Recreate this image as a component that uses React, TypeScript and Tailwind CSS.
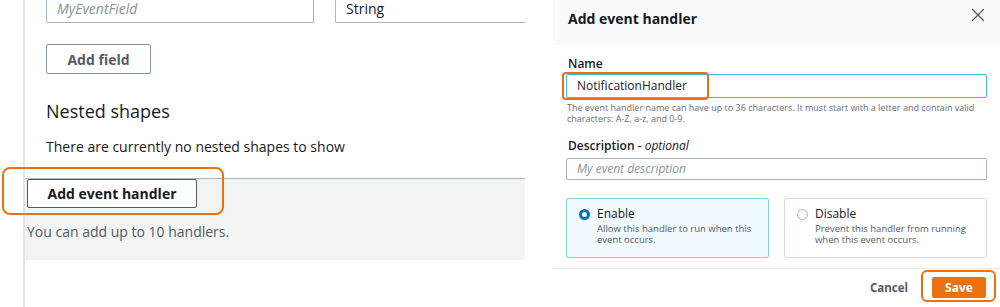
import { X } from "lucide-react";

const font = { fontFamily: '"Open Sans", "Noto Sans", Arial, sans-serif' };

function RadioCard({
  selected,
  title,
  lines,
}: {
  selected?: boolean;
  title: string;
  lines: string[];
}) {
  return (
    <div
      className={`flex-1 h-[60px] rounded-[2px] border flex items-start pl-[12px] pt-[7px] ${
        selected ? "bg-[#f1faff] border-[#88cbe0]" : "bg-white border-[#d5dbdb]"
      }`}
    >
      <span
        className={`mt-[3px] shrink-0 w-[11px] h-[11px] rounded-full bg-white ${
          selected ? "border-[3px] border-[#0073bb]" : "border border-[#aab7b8]"
        }`}
      />
      <div className="ml-[7px]">
        <div className="text-[12px] leading-[16px] font-medium text-[#16191f]">{title}</div>
        <div className="text-[9.5px] leading-[11px] text-[#545b64] mt-[1px] whitespace-nowrap">
          {lines.map((l) => (
            <div key={l}>{l}</div>
          ))}
        </div>
      </div>
    </div>
  );
}

export default function App() {
  return (
    <div className="relative w-[1000px] h-[307px] bg-white flex overflow-hidden" style={font}>
      {/* Left: event shape editor */}
      <div className="ml-[23px] w-[502px] shrink-0 border-l-2 border-[#e3e5e6] flex flex-col">
        <div className="pl-[21px] flex flex-col">
          <div className="flex gap-[21px]">
            <div className="w-[268px] h-[23px] border border-t-0 border-[#aab7b8] rounded-b-[2px] pl-[10px] pt-[1px]">
              <span className="block text-[14px] leading-[16px] italic text-[#879596]">MyEventField</span>
            </div>
            <div className="flex-1 h-[23px] border border-t-0 border-r-0 border-[#aab7b8] rounded-bl-[2px] pl-[10px] pt-[1px]">
              <span className="block text-[14px] leading-[16px] text-[#16191f]">String</span>
            </div>
          </div>
          <button className="mt-[21px] w-[105px] h-[30px] border border-[#879596] rounded-[2px] bg-white text-[14px] font-bold text-[#545b64]">
            Add field
          </button>
          <div className="mt-[25px] text-[18px] leading-[24px] text-[#16191f]">Nested shapes</div>
          <div className="mt-[14px] text-[14px] leading-[20px] text-[#16191f]">
            There are currently no nested shapes to show
          </div>
        </div>
        <div className="mt-[21px] border-t border-[#aab7b8] bg-[#f2f3f3] pb-[18px] flex flex-col items-start">
          <button className="ml-[2px] w-[170px] h-[29px] border border-[#545b64] rounded-[2px] bg-white text-[14px] font-bold text-[#16191f]">
            Add event handler
          </button>
          <div className="ml-[2px] mt-[14px] text-[14px] leading-[20px] text-[#545b64]">
            You can add up to 10 handlers.
          </div>
        </div>
      </div>

      {/* Right: side panel */}
      <div className="ml-[28px] flex-1 min-w-0 flex flex-col">
        <div className="h-[45px] bg-[#fafafa] flex items-start justify-between pl-[15px] pr-[11px]">
          <span className="mt-[9px] text-[14px] leading-[20px] font-bold text-[#16191f]">Add event handler</span>
          <X className="mt-[4px] w-[22px] h-[22px] text-[#545b64]" strokeWidth={1.4} />
        </div>
        <div className="px-[13px] flex flex-col">
          <div className="mt-[11px] ml-[2px] text-[12px] leading-[16px] font-semibold text-[#16191f]">Name</div>
          <div className="mt-[2px] h-[24px] border border-[#44b9d6] rounded-[2px] flex items-center pl-[10px]">
            <span className="text-[12px] text-[#16191f]">NotificationHandler</span>
          </div>
          <div className="mt-[4px] ml-[1px] text-[9px] leading-[11px] text-[#687078] whitespace-nowrap">
            The event handler name can have up to 36 characters. It must start with a letter and contain valid
            <br />
            characters: A-Z, a-z, and 0-9.
          </div>
          <div className="mt-[14px] ml-[2px] text-[12px] leading-[16px] text-[#16191f]">
            <span className="font-semibold">Description - </span>
            <span className="italic">optional</span>
          </div>
          <div className="mt-[4px] h-[22px] border border-[#aab7b8] rounded-[2px] flex items-center pl-[10px]">
            <span className="text-[12px] italic text-[#879596]">My event description</span>
          </div>
          <div className="mt-[18px] flex gap-[15px]">
            <RadioCard
              selected
              title="Enable"
              lines={["Allow this handler to run when this", "event occurs."]}
            />
            <RadioCard
              title="Disable"
              lines={["Prevent this handler from running", "when this event occurs."]}
            />
          </div>
        </div>
        <div className="mt-[10px] border-t border-[#eaeded] flex justify-end items-center gap-[24px] pr-[14px] pt-[8px]">
          <span className="text-[11.5px] font-bold text-[#545b64]">Cancel</span>
          <button className="w-[54px] h-[21px] bg-[#ec7211] rounded-[2px] text-[12px] font-bold text-white">
            Save
          </button>
        </div>
      </div>

      {/* Highlight callouts */}
      <div className="absolute left-[2px] top-[167px] w-[222px] h-[48px] border-2 border-[#ec7211] rounded-[8px]" />
      <div className="absolute left-[562px] top-[72px] w-[147px] h-[28px] border-2 border-[#ec7211] rounded-[4px]" />
      <div className="absolute left-[921px] top-[270px] w-[75px] h-[32px] border-2 border-[#ec7211] rounded-[6px]" />
    </div>
  );
}
